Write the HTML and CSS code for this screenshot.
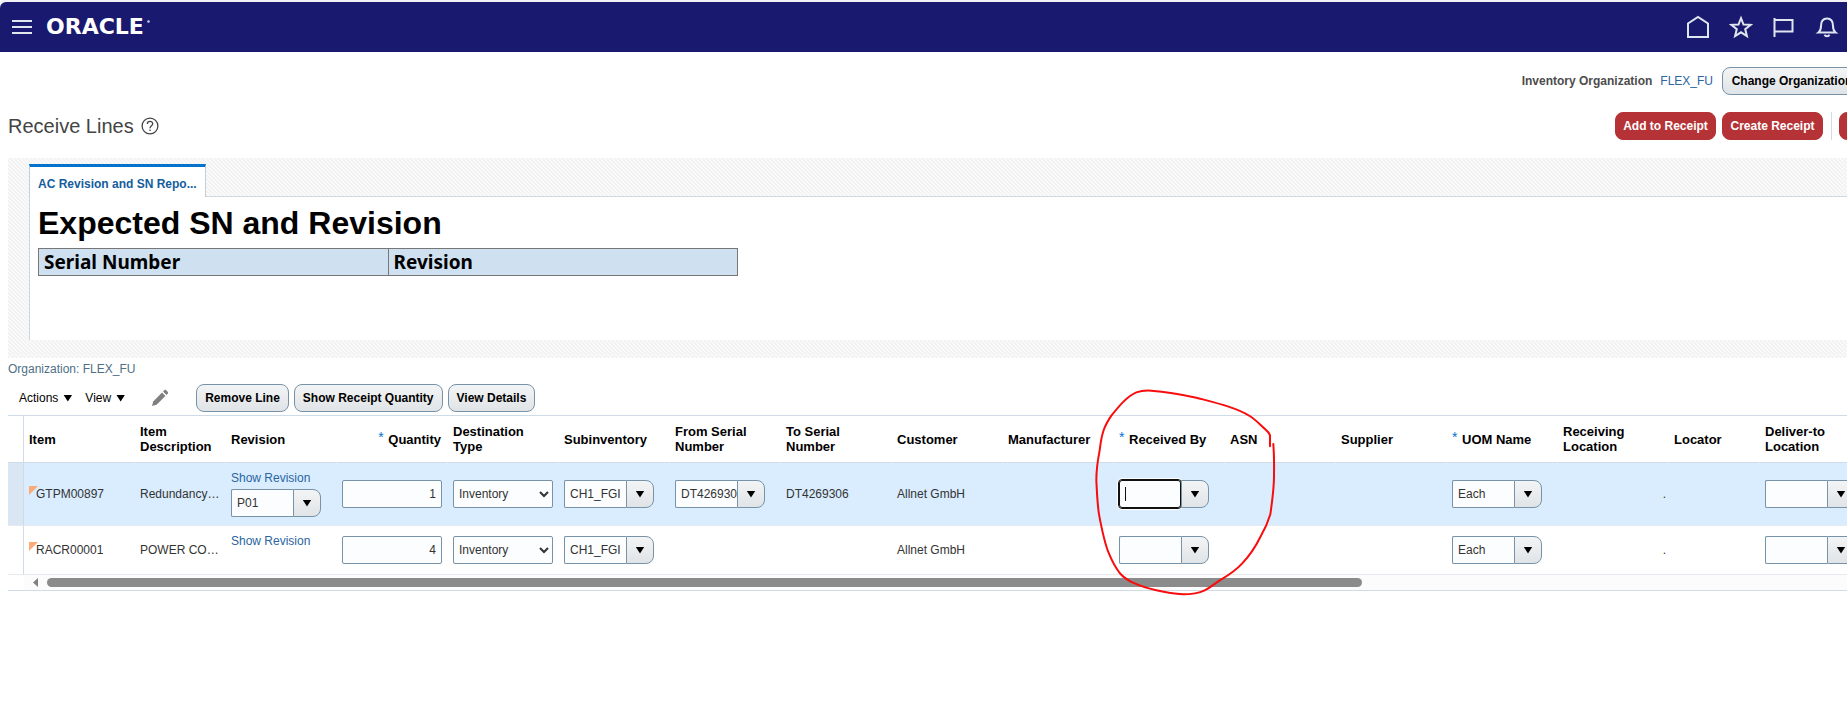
FILE: index.html
```html
<!DOCTYPE html>
<html lang="en">
<head>
<meta charset="utf-8">
<title>Receive Lines</title>
<link rel="stylesheet" href="styles.css">
</head>
<body>
<header class="topbar">
  <button class="icon-btn" aria-label="Navigator"><svg width="20" height="14" viewBox="0 0 20 14"><path d="M0 1h20M0 7h20M0 13h20" stroke="#dfe6ee" stroke-width="2"/></svg></button>
  <div class="logo">ORACLE<svg class="logo-mark" width="3" height="3" viewBox="0 0 3 3"><circle cx="1.5" cy="1.5" r="1.3" fill="#c9cfe2"/></svg></div>
  <nav class="topicons">
    <button class="icon-btn" aria-label="Home"><svg width="24" height="24" viewBox="0 0 24 24"><path d="M2 22V8.500L12 2l10 6.500V22z"/></svg></button>
    <button class="icon-btn" aria-label="Favorites"><svg width="24" height="24" viewBox="0 0 24 24"><path d="M12 3.200l2.500 6.300 7.200.3-5.500 4.300 1.700 7L12 17.300l-5.900 3.800 1.700-7L2.300 9.800l7.200-.3z"/></svg></button>
    <button class="icon-btn" aria-label="Watchlist"><svg width="24" height="24" viewBox="0 0 24 24"><path d="M2.500 3v19M2.500 5h18v11.500h-18"/></svg></button>
    <button class="icon-btn" aria-label="Notifications"><svg width="24" height="24" viewBox="0 0 24 24"><path d="M3.500 17.500c2-1.500 2.500-3.500 2.500-6.500 0-5 2-7.500 6-7.500s6 2.500 6 7.500c0 3 .5 5 2.500 6.500z"/><path d="M9.500 19.800c1 2 4 2 5 0"/></svg></button>
  </nav>
</header>

<main class="page">
  <div class="row org-row">
    <span class="org-label">Inventory Organization</span>
    <a class="link org-link" href="#">FLEX_FU</a>
    <button class="btn btn-change">Change Organization</button>
  </div>
  <div class="row title-row">
    <h1 class="title">Receive Lines</h1>
    <button class="icon-btn help" aria-label="Help"><svg width="18" height="18" viewBox="0 0 18 18" fill="none" stroke="#444" stroke-width="1.300"><circle cx="9" cy="9" r="7.900"/><path d="M6.300 7c0-3.600 5.400-3.500 5.400-.3 0 2-2.700 2-2.700 4.500"/><path d="M9 12.600v1.500"/></svg></button>
    <div class="actions">
      <button class="btn btn-red">Add to Receipt</button>
      <button class="btn btn-red">Create Receipt</button>
      <span class="divider"></span>
      <button class="btn btn-red btn-more" aria-label="More"></button>
    </div>
  </div>

  <section class="panel">
    <div class="tabs"><a class="tab" href="#">AC Revision and SN Repo...</a><div class="tab-fill"></div></div>
    <div class="report">
      <h2 class="report-title">Expected SN and Revision</h2>
      <table class="report-table"><tr><th>Serial Number</th><th>Revision</th></tr></table>
    </div>
  </section>

  <p class="org-note">Organization: FLEX_FU</p>
  <div class="toolbar">
    <button class="menu">Actions<i class="caret"></i></button>
    <button class="menu">View<i class="caret"></i></button>
    <button class="icon-btn pencil" aria-label="Edit"><svg width="18" height="18" viewBox="0 0 18 18" fill="#808080"><path d="M1 17l1.200-4.600L11 3.600l3.400 3.400-8.800 8.800z"/><path d="M12 2.600l1.300-1.300c.6-.6 1.300-.6 1.900 0l1.500 1.500c.6.600.6 1.300 0 1.900L15.400 6z"/></svg></button>
    <button class="btn">Remove Line</button>
    <button class="btn">Show Receipt Quantity</button>
    <button class="btn">View Details</button>
  </div>

  <div class="grid">
    <table class="lines">
      <colgroup><col class="c-head"><col class="c-wide"><col class="c-narrow"><col class="c-wide" span="13"><col class="c-narrow"><col class="c-wide"></colgroup>
      <thead>
        <tr>
          <th class="rowhead"></th><th>Item</th><th>Item Description</th><th>Revision</th>
          <th class="num"><span class="req">*</span>Quantity</th><th>Destination Type</th><th>Subinventory</th>
          <th>From Serial Number</th><th>To Serial Number</th><th>Customer</th><th>Manufacturer</th>
          <th><span class="req">*</span>Received By</th><th>ASN</th><th>Supplier</th>
          <th><span class="req">*</span>UOM Name</th><th>Receiving Location</th><th>Locator</th><th>Deliver-to Location</th>
        </tr>
      </thead>
      <tbody>
        <tr class="selected">
          <td class="rowhead"></td>
          <td class="item">GTPM00897</td>
          <td class="clip">Redundancy…</td>
          <td class="rev"><a class="link" href="#">Show Revision</a><div class="lov"><input aria-label="Revision" value="P01"><button aria-label="Search revision"><i class="caret"></i></button></div></td>
          <td><input class="qty" aria-label="Quantity" value="1"></td>
          <td><select class="dest" aria-label="Destination Type"><option>Inventory</option></select></td>
          <td><div class="lov"><input aria-label="Subinventory" value="CH1_FGI"><button aria-label="Search subinventory"><i class="caret"></i></button></div></td>
          <td><div class="lov"><input aria-label="From Serial Number" value="DT4269306"><button aria-label="Search serial"><i class="caret"></i></button></div></td>
          <td>DT4269306</td><td>Allnet GmbH</td><td></td>
          <td><div class="lov active"><input aria-label="Received By"><button aria-label="Search receiver"><i class="caret"></i></button></div></td>
          <td></td><td></td>
          <td><div class="lov"><input aria-label="UOM Name" value="Each"><button aria-label="Search UOM"><i class="caret"></i></button></div></td>
          <td class="num">.</td><td></td>
          <td><div class="lov"><input aria-label="Deliver-to Location"><button aria-label="Search location"><i class="caret"></i></button></div></td>
        </tr>
        <tr>
          <td class="rowhead"></td>
          <td class="item">RACR00001</td>
          <td class="clip">POWER CO…</td>
          <td class="rev"><a class="link" href="#">Show Revision</a></td>
          <td><input class="qty" aria-label="Quantity" value="4"></td>
          <td><select class="dest" aria-label="Destination Type"><option>Inventory</option></select></td>
          <td><div class="lov"><input aria-label="Subinventory" value="CH1_FGI"><button aria-label="Search subinventory"><i class="caret"></i></button></div></td>
          <td></td><td></td><td>Allnet GmbH</td><td></td>
          <td><div class="lov"><input aria-label="Received By"><button aria-label="Search receiver"><i class="caret"></i></button></div></td>
          <td></td><td></td>
          <td><div class="lov"><input aria-label="UOM Name" value="Each"><button aria-label="Search UOM"><i class="caret"></i></button></div></td>
          <td class="num">.</td><td></td>
          <td><div class="lov"><input aria-label="Deliver-to Location"><button aria-label="Search location"><i class="caret"></i></button></div></td>
        </tr>
      </tbody>
    </table>
    <div class="scroll"><i class="scroll-left"></i><div class="thumb"></div></div>
    <svg class="markup" width="185" height="212" viewBox="160 50 555 636" fill="none" stroke="#f80c0c" stroke-width="6" stroke-linejoin="round" stroke-linecap="round"><path d="M691 228 V195 Q688 186 680 180 C655 157 648 148 630 137 C590 112 530 98 470 82 C420 71 375 64 335 61 Q310 59 290 66 C262 78 240 105 215 136 C192 170 186 190 180 240 C172 280 170 300 170 330 C172 370 173 400 178 432 C186 475 195 520 208 550 Q222 584 240 608 C252 622 265 630 280 637 Q310 651 350 660 Q395 670 430 672 Q470 672 495 660 C515 650 525 639 545 627 Q585 604 607 580 Q640 545 662 500 Q682 466 692 432 C698 390 704 350 703 310 Q704 260 701 221"/></svg>
  </div>
</main>
</body>
</html>
```
FILE: styles.css
```css
* { box-sizing: border-box; }
body {
  margin: 0;
  padding-top: 2px;
  min-height: 100vh;
  overflow: hidden;
  background: #fff;
  color: #333;
  font: 12px/14px "Liberation Sans", Arial, sans-serif;
}
button, input, select { font: inherit; color: inherit; }
.icon-btn { display: flex; padding: 0; border: 0; background: none; }
.link { color: #2a659f; text-decoration: none; }

.topbar {
  display: flex;
  align-items: center;
  height: 50px;
  padding: 0 8px 0 12px;
  background: #1a1970;
  border-top-left-radius: 6px;
  box-shadow: 0 -4px 0 #f1f1f5;
}
.logo {
  display: flex;
  align-items: flex-start;
  gap: 3px;
  margin-left: 14px;
  color: #fff;
  font: bold 22px/24px "DejaVu Sans", sans-serif;
}
.logo-mark { margin-top: 5px; }
.topicons { display: flex; gap: 19px; margin-left: auto; fill: none; stroke: #dfe6ee; stroke-width: 2; }

.page { padding-left: 8px; }
.row { display: flex; align-items: center; margin-right: -15px; }
.org-row { justify-content: flex-end; padding-top: 15px; }
.org-label { font-weight: bold; color: #4c4c4c; }
.org-link { margin: 0 9px 0 8px; }
.btn {
  height: 28px;
  padding: 0 8px;
  border: 1px solid #7893a8;
  border-radius: 8px;
  background: linear-gradient(#f3f4f5, #e0e4e7);
  color: #000;
  font-weight: bold;
  white-space: nowrap;
}
.btn-change { width: 140px; }
.title-row { padding-top: 17px; }
.title { margin: 0; font: 20px/28px "Liberation Sans", Arial, sans-serif; color: #444; }
.help { margin-left: 7px; }
.actions { display: flex; gap: 6px; margin-left: auto; }
.btn-red { width: 101px; padding: 0; border-color: #b53337; background: #b53337; color: #fff; }
.btn-more { width: 23px; }
.divider { width: 1px; margin: 0 1px 0 2px; background: #d0dbe4; }

.panel {
  margin-top: 18px;
  padding: 6px 0 18px 21px;
  background: linear-gradient(45deg, #f2f2f2 25%, #fafafa 25% 50%, #f2f2f2 50% 75%, #fafafa 75%) 0 0 / 4px 4px;
}
.tabs { display: flex; align-items: flex-end; }
.tab {
  height: 33px;
  padding: 10px 8px 0;
  border: 1px solid #c4ced7;
  border-top: 3px solid #0572ce;
  border-bottom: 0;
  background: #fff;
  color: #145c9e;
  font-weight: bold;
  text-decoration: none;
  width: 177px;
  white-space: nowrap;
}
.tab-fill { flex: 1; border-bottom: 1px solid #d0dae4; }
.report { min-height: 143px; padding: 7px 8px 0; border-left: 1px solid #c9d5df; background: #fff; }
.report-title { margin: 0; color: #000; font-size: 32px; line-height: 38px; }
.report-table { width: 700px; margin-top: 6px; border-collapse: collapse; table-layout: fixed; }
.report-table th {
  height: 27px;
  padding: 0 5px;
  border: 1px solid #777;
  background: #cfe0f1;
  color: #000;
  font: bold 19px/26px "Noto Sans", sans-serif;
  text-align: left;
}

.org-note { margin: 4px 0 0; color: #4f6f87; }
.toolbar { display: flex; align-items: center; gap: 5px; padding: 8px 0 3px 11px; }
.menu { display: flex; align-items: center; gap: 5px; margin-right: 8px; padding: 0; border: 0; background: none; color: #000; }
.caret { width: 9px; height: 7px; background: #000; clip-path: polygon(0 0, 100% 0, 50% 100%); }
.pencil { margin: 0 22px 0 13px; }

.grid { position: relative; border-top: 1px solid #cfdbe6; border-bottom: 1px solid #cfdbe6; }
.lines { width: 1863px; border-spacing: 0; table-layout: fixed; }
.c-head { width: 16px; }
.c-wide { width: 111px; }
.c-narrow { width: 91px; }
.lines th {
  height: 47px;
  padding: 0 6px 0 5px;
  border-right: 1px solid #fff;
  border-bottom: 1px solid #cfdbe6;
  color: #000;
  font-size: 13px;
  line-height: 15px;
  text-align: left;
}
.lines td { height: 49px; padding: 0 5px; border-bottom: 1px solid #e6eaee; white-space: nowrap; }
.lines .rowhead { padding: 0; border-right: 1px solid #cfdbe6; }
.lines .num { text-align: right; }
.lines td.num { padding-right: 3px; }
.selected { background: #d9edff; }
.selected .rowhead { background: #dae6f4; }
.req { display: inline-block; width: 10px; color: #0572ce; font-size: 14px; font-weight: normal; line-height: 10px; vertical-align: 2px; text-align: left; }
.lines .item { position: relative; padding-left: 12px; }
.item::before {
  content: "";
  position: absolute;
  left: 5px;
  top: calc(50% - 8px);
  width: 9px;
  height: 9px;
  background: #fbaa78;
  clip-path: polygon(0 0, 100% 0, 0 100%);
}
.lines .rev { padding-top: 8px; padding-bottom: 8px; vertical-align: top; }
.rev .link { display: block; }
.rev .lov { margin-top: 4px; }
.lov { position: relative; display: flex; width: 90px; height: 28px; }
.lov input, .qty, .dest { height: 28px; border: 1px solid #7893a8; border-radius: 2px; background: #fcfdfe; }
.lov input { width: 62px; padding: 0 0 0 5px; border-right: 0; border-radius: 2px 0 0 2px; }
.lov button {
  display: flex;
  align-items: center;
  justify-content: center;
  width: 28px;
  padding: 0;
  border: 1px solid #7893a8;
  border-radius: 0 8px 8px 0;
  background: linear-gradient(#f3f4f5, #e0e4e7);
}
.active input { border: 1px solid #111; border-radius: 3px; outline: 1px solid #111; box-shadow: 0 0 0 2px #fff; }
.active::before { content: ""; position: absolute; left: 6px; top: 7px; width: 1px; height: 14px; background: #111; }
.qty { display: block; width: 100px; padding: 0 5px; text-align: right; }
.dest { display: block; width: 100px; padding: 0 1px; }
.scroll { display: flex; align-items: center; height: 15px; margin-left: 16px; padding-left: 9px; background: #fcfcfc; }
.scroll-left { width: 5px; height: 9px; background: #808080; clip-path: polygon(100% 0, 100% 100%, 0 50%); }
.thumb { width: 72.5%; height: 9px; margin-left: 9px; border-radius: 5px; background: #8b8b8b; }
.markup { position: absolute; left: 1085px; top: -29px; overflow: visible; }
```
